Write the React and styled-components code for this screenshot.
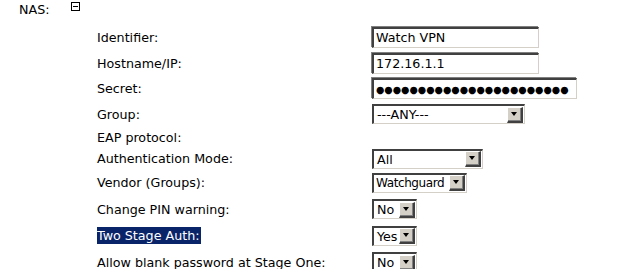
import React from "react";
import styled, { createGlobalStyle } from "styled-components";

const GlobalStyle = createGlobalStyle`
  html, body {
    margin: 0;
    padding: 0;
    background: #ffffff;
  }
  body {
    font-family: "DejaVu Sans", Verdana, sans-serif;
    font-size: 12.7px;
    color: #000;
  }
`;

const Page = styled.div`
  width: 623px;
  height: 269px;
  overflow: hidden;
`;

const Header = styled.div`
  display: flex;
  align-items: center;
  height: 24px;
  padding-left: 19px;
`;

const HeaderLabel = styled.span`
  width: 52px;
  margin-top: -6px;
`;

const ToggleBox = styled.span`
  width: 7px;
  height: 7px;
  border: 1px solid #000;
  position: relative;
  margin-top: -11px;
  &::after {
    content: "";
    position: absolute;
    left: 1px;
    right: 1px;
    top: 3px;
    height: 1px;
    background: #000;
  }
`;

const Form = styled.div`
  display: flex;
  flex-direction: column;
  padding-left: 97px;
`;

const Row = styled.div`
  display: grid;
  grid-template-columns: 275px 1fr;
  align-items: center;
  height: ${(p) => p.$h}px;
`;

const Label = styled.span`
  justify-self: start;
  line-height: 17px;
  padding-right: 1px;
  background: ${(p) => (p.$selected ? "#0a246a" : "transparent")};
  color: ${(p) => (p.$selected ? "#ffffff" : "#000000")};
`;

const TextInput = styled.input`
  box-sizing: border-box;
  width: ${(p) => p.$w}px;
  height: 21px;
  margin: 0;
  padding: 0 2px;
  font-family: "DejaVu Sans", Verdana, sans-serif;
  font-size: ${(p) => (p.$secret ? "9.6px" : "12.7px")};
  color: #000;
  background: #fff;
  border-style: solid;
  border-width: 2px 1px 1px 2px;
  border-color: #404040 #d4d0c8 #d4d0c8 #404040;
  box-shadow: -1px -1px 0 #808080;
  outline: none;
`;

const Select = styled.div`
  box-sizing: border-box;
  width: ${(p) => p.$w}px;
  height: 20px;
  display: flex;
  align-items: center;
  background: #fff;
  border-style: solid;
  border-width: 2px 1px 1px 2px;
  border-color: #404040 #d4d0c8 #d4d0c8 #404040;
`;

const SelectValue = styled.span`
  flex: 1;
  min-width: 0;
  padding-left: ${(p) => (p.$tight ? "2px" : "3px")};
  white-space: nowrap;
  overflow: hidden;
  font-size: ${(p) => (p.$tight ? "12px" : "12.7px")};
  letter-spacing: ${(p) => (p.$tight ? "-0.4px" : "normal")};
`;

const ArrowButton = styled.span`
  box-sizing: border-box;
  flex: none;
  width: 16px;
  height: 16px;
  margin-right: 1px;
  background: #d4d0c8;
  border-style: solid;
  border-width: 1px 2px 2px 1px;
  border-color: #ffffff #404040 #404040 #ffffff;
  box-shadow: inset -1px -1px 0 #808080;
  display: flex;
  align-items: center;
  justify-content: center;
  &::after {
    content: "";
    width: 0;
    height: 0;
    border-left: 3.5px solid transparent;
    border-right: 3.5px solid transparent;
    border-top: 4px solid #000;
    margin-left: -1px;
    margin-top: -1px;
  }
`;

function Dropdown({ width, value, tight }) {
  return (
    <Select $w={width}>
      <SelectValue $tight={tight}>{value}</SelectValue>
      <ArrowButton />
    </Select>
  );
}

const fields = [
  { label: "Identifier:", h: 26, input: { w: 167, value: "Watch VPN" } },
  { label: "Hostname/IP:", h: 26, input: { w: 167, value: "172.16.1.1" } },
  { label: "Secret:", h: 25, input: { w: 205, value: "●●●●●●●●●●●●●●●●●●●●●●●", secret: true } },
  { label: "Group:", h: 26, select: { w: 153, value: "---ANY---" } },
  { label: "EAP protocol:", h: 21 },
  { label: "Authentication Mode:", h: 21, select: { w: 111, value: "All" } },
  { label: "Vendor (Groups):", h: 27, select: { w: 95, value: "Watchguard", tight: true } },
  { label: "Change PIN warning:", h: 26, select: { w: 45, value: "No" } },
  { label: "Two Stage Auth:", h: 27, select: { w: 45, value: "Yes" }, selected: true },
  { label: "Allow blank password at Stage One:", h: 26, select: { w: 45, value: "No" } },
];

export default function App() {
  return (
    <Page>
      <GlobalStyle />
      <Header>
        <HeaderLabel>NAS:</HeaderLabel>
        <ToggleBox />
      </Header>
      <Form>
        {fields.map((f) => (
          <Row key={f.label} $h={f.h}>
            <Label $selected={f.selected}>{f.label}</Label>
            {f.input ? (
              <TextInput $w={f.input.w} $secret={f.input.secret} defaultValue={f.input.value} readOnly />
            ) : f.select ? (
              <Dropdown width={f.select.w} value={f.select.value} tight={f.select.tight} />
            ) : (
              <span />
            )}
          </Row>
        ))}
      </Form>
    </Page>
  );
}
